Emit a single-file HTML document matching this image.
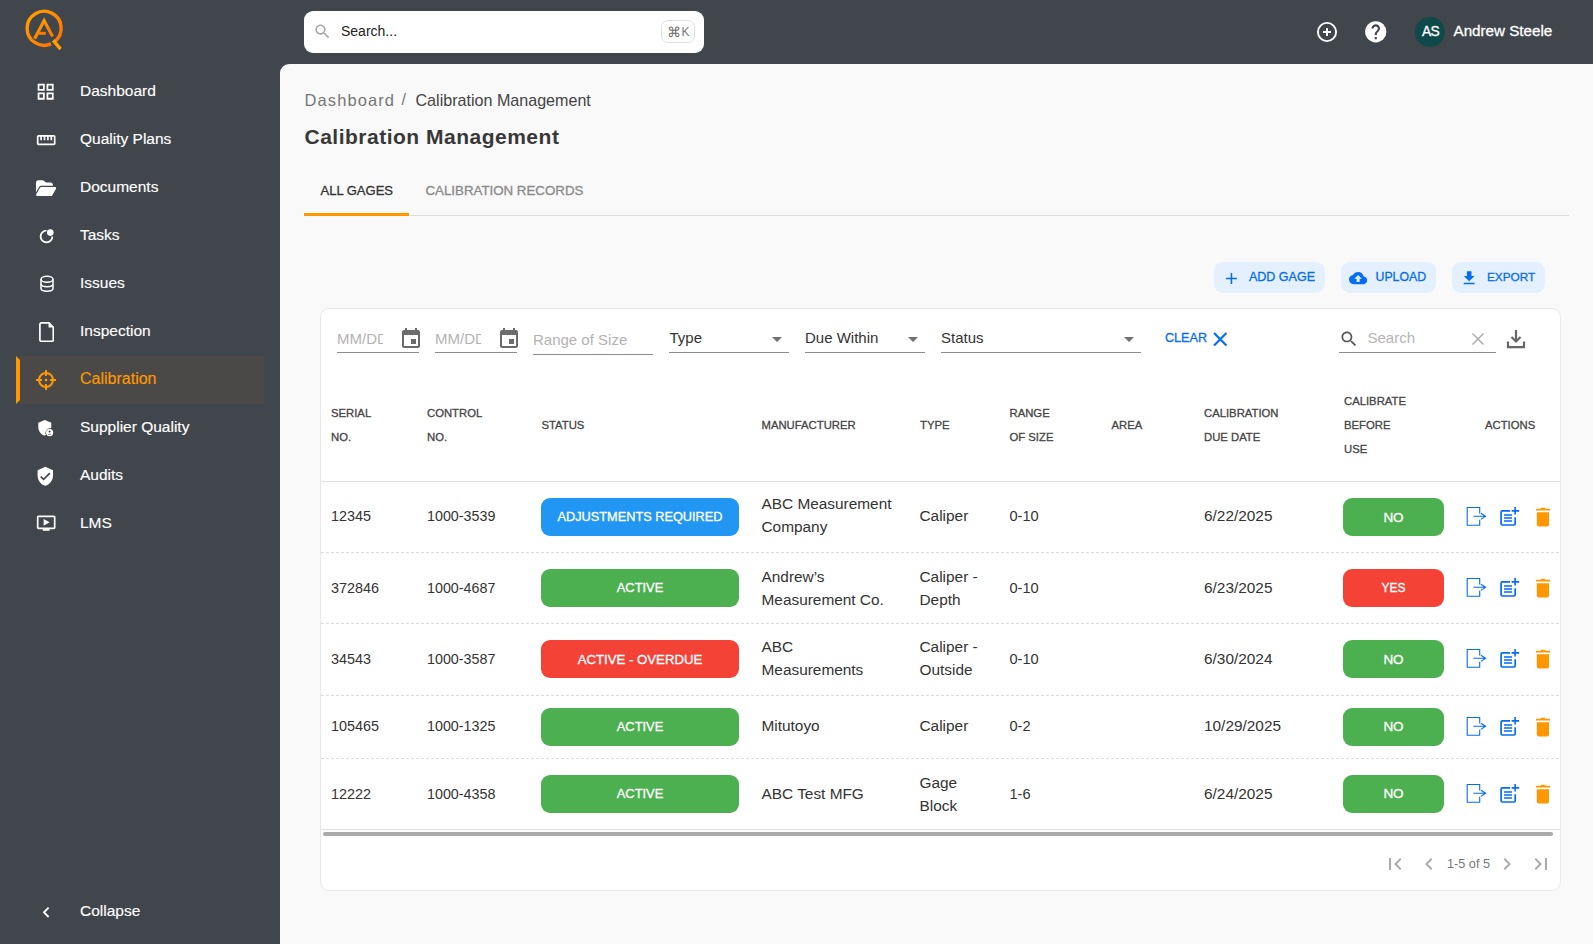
<!DOCTYPE html>
<html><head><meta charset="utf-8"><title>Calibration Management</title>
<style>
html,body{margin:0;padding:0;}
body{width:1593px;height:944px;overflow:hidden;position:relative;background:#41454c;font-family:"Liberation Sans", sans-serif;}
.t{position:absolute;white-space:nowrap;line-height:1;}
svg{display:block;}
</style></head><body>
<div style="position:absolute;left:280px;top:64px;width:1313px;height:880px;background:#f9f9f9;border-top-left-radius:9px;"></div>
<svg style="position:absolute;left:20px;top:6px;" width="48" height="46" viewBox="20 6 48 46">
<defs><linearGradient id="lg" x1="0" y1="0" x2="1" y2="1"><stop offset="0" stop-color="#ffa200"/><stop offset="1" stop-color="#ff7000"/></linearGradient></defs>
<path d="M51.01 43.83 A17 17 0 1 1 54.57 41.70" fill="none" stroke="url(#lg)" stroke-width="3.4"/>
<path d="M53.2 40.4 L60.6 49.2" stroke="#ffa000" stroke-width="3.4" fill="none"/>
<path d="M34.6 38.8 L44.1 20.6 L52.6 36.6" fill="none" stroke="url(#lg)" stroke-width="3.2" stroke-linejoin="miter"/>
<path d="M38.6 33.3 L45.8 33.3" stroke="#ff7a00" stroke-width="3" fill="none"/>
</svg>
<div style="position:absolute;left:16px;top:356px;width:248px;height:48px;background:#4a4947;"></div>
<div style="position:absolute;left:16px;top:356px;width:0;height:40px;border-left:4px solid #ff9800;border-top:4px solid transparent;border-bottom:4px solid transparent;"></div>
<div class="t" style="left:80px;top:82.88px;font-size:15.5px;color:#ffffff;-webkit-text-stroke:0.15px #ffffff;">Dashboard</div>
<div class="t" style="left:80px;top:130.88px;font-size:15.5px;color:#ffffff;-webkit-text-stroke:0.15px #ffffff;">Quality Plans</div>
<div class="t" style="left:80px;top:178.88px;font-size:15.5px;color:#ffffff;-webkit-text-stroke:0.15px #ffffff;">Documents</div>
<div class="t" style="left:80px;top:226.88px;font-size:15.5px;color:#ffffff;-webkit-text-stroke:0.15px #ffffff;">Tasks</div>
<div class="t" style="left:80px;top:274.88px;font-size:15.5px;color:#ffffff;-webkit-text-stroke:0.15px #ffffff;">Issues</div>
<div class="t" style="left:80px;top:322.88px;font-size:15.5px;color:#ffffff;-webkit-text-stroke:0.15px #ffffff;">Inspection</div>
<div class="t" style="left:80px;top:371.46px;font-size:16px;color:#ff9800;-webkit-text-stroke:0.15px #ff9800;">Calibration</div>
<div class="t" style="left:80px;top:418.88px;font-size:15.5px;color:#ffffff;-webkit-text-stroke:0.15px #ffffff;">Supplier Quality</div>
<div class="t" style="left:80px;top:466.88px;font-size:15.5px;color:#ffffff;-webkit-text-stroke:0.15px #ffffff;">Audits</div>
<div class="t" style="left:80px;top:514.88px;font-size:15.5px;color:#ffffff;-webkit-text-stroke:0.15px #ffffff;">LMS</div>
<div class="t" style="left:80px;top:902.88px;font-size:15.5px;color:#fff;-webkit-text-stroke:0.15px #fff;">Collapse</div>
<svg style="position:absolute;left:35.3px;top:81.3px;" width="21.3" height="21.3" viewBox="0 0 24 24"><path fill="#ffffff" d="M3 3v8h8V3H3zm6 6H5V5h4v4zm-6 4v8h8v-8H3zm6 6H5v-4h4v4zm4-16v8h8V3h-8zm6 6h-4V5h4v4zm-6 4v8h8v-8h-8zm6 6h-4v-4h4v4z"/></svg>
<svg style="position:absolute;left:36.15px;top:129.5px;" width="20.4" height="20.4" viewBox="0 0 24 24"><path fill="#ffffff" d="M21 6H3c-1.1 0-2 .9-2 2v8c0 1.1.9 2 2 2h18c1.1 0 2-.9 2-2V8c0-1.1-.9-2-2-2zm0 10H3V8h2v4h2V8h2v4h2V8h2v4h2V8h2v4h2V8h2v8z"/></svg>
<svg style="position:absolute;left:35.8px;top:179.7px;preserveAspectRatio:none" width="20.3" height="16.1" viewBox="0 32 576 448"><path fill="#ffffff" d="M88.7 223.8L0 375.8V96C0 60.7 28.7 32 64 32H181.5c17 0 33.3 6.7 45.3 18.7l26.5 26.5c12 12 28.3 18.7 45.3 18.7H416c35.3 0 64 28.7 64 64v32H144c-22.8 0-43.8 12.1-55.3 31.8zm27.6 16.1C122.1 230 132.6 224 144 224H544c11.5 0 22 6.1 27.7 16.1s5.7 22.2-.1 32.1l-112 192C453.9 474 443.4 480 432 480H32c-11.5 0-22-6.1-27.7-16.1s-5.7-22.2 .1-32.1l112-192z"/></svg>
<svg style="position:absolute;left:38px;top:227px;" width="18" height="18" viewBox="0 0 18 18"><path d="M8.5 3.6 A5.9 5.9 0 1 0 14.4 9.5" fill="none" stroke="#ffffff" stroke-width="1.8"/><circle cx="12.3" cy="5.6" r="3.3" fill="#ffffff"/></svg>
<svg style="position:absolute;left:39px;top:275px;" width="16" height="18" viewBox="0 0 16 18"><g fill="none" stroke="#ffffff" stroke-width="1.5"><ellipse cx="8" cy="4.2" rx="6" ry="3"/><path d="M2 4.2v9.4c0 1.5 2.7 2.6 6 2.6s6-1.1 6-2.6V4.2"/><path d="M2 9.1c0 1.5 2.7 2.6 6 2.6s6-1.1 6-2.6"/></g></svg>
<svg style="position:absolute;left:38.5px;top:322px;" width="15.2" height="20.2" viewBox="0 0 15.2 20.2"><path d="M2.3 0.9 H10 L14.3 5.2 V17.9 A1.4 1.4 0 0 1 12.9 19.3 H2.3 A1.4 1.4 0 0 1 0.9 17.9 V2.3 A1.4 1.4 0 0 1 2.3 0.9Z" fill="none" stroke="#ffffff" stroke-width="1.7"/><path d="M9.6 0.9 V5.6 H14.3Z" fill="#ffffff"/></svg>
<svg style="position:absolute;left:35.9px;top:369.9px;" width="20" height="20" viewBox="0 0 20 20"><g stroke="#ff9800" fill="none" stroke-width="2"><circle cx="10" cy="10" r="7"/><path d="M10 0v6.1M10 13.9v6.1M0 10h6.1M13.9 10h6.1"/></g><rect x="8.8" y="8.8" width="2.4" height="2.4" fill="#ff9800"/></svg>
<svg style="position:absolute;left:37px;top:419px;" width="18" height="18" viewBox="0 0 18 18"><path d="M7.8 1 L1.3 3.8 V8.2 C1.3 12 3.9 15.5 7.8 16.6 C8.2 16.5 8.6 16.3 9 16.1 A4.6 4.6 0 0 1 13.8 9.3 C14.1 8.9 14.3 8.5 14.3 8.2 V3.8Z" fill="#ffffff"/><circle cx="12.6" cy="13.6" r="3.6" fill="#ffffff"/><circle cx="12.6" cy="12.6" r="1" fill="#41454c"/><path d="M10.7 15.4 C11 14.4 14.2 14.4 14.5 15.4Z" fill="#41454c"/></svg>
<svg style="position:absolute;left:35.0px;top:465.5px;" width="20.6" height="20.6" viewBox="0 0 24 24"><path fill="#ffffff" d="M12 1L3 5v6c0 5.55 3.84 10.74 9 12 5.16-1.26 9-6.45 9-12V5l-9-4zm-2 16l-4-4 1.41-1.41L10 14.17l6.59-6.59L18 9l-8 8z"/></svg>
<svg style="position:absolute;left:36.05px;top:513.35px;" width="20.4" height="20.4" viewBox="0 0 24 24"><path fill="#ffffff" d="M21 3H3c-1.11 0-2 .89-2 2v12c0 1.1.89 2 2 2h5v2h8v-2h5c1.1 0 1.99-.9 1.99-2L23 5c0-1.11-.9-2-2-2zm0 14H3V5h18v12zM16 11l-7 4V7z"/></svg>
<svg style="position:absolute;left:38px;top:904px;" width="16" height="16" viewBox="0 0 16 16"><path d="M10.6 3.6 L6 8.3 L10.6 13" fill="none" stroke="#ffffff" stroke-width="1.9"/></svg>
<div style="position:absolute;left:304px;top:11px;width:400px;height:42px;background:#fff;border-radius:9px;"></div>
<svg style="position:absolute;left:313px;top:22px;" width="19" height="19" viewBox="0 0 24 24"><path fill="#a9a9a9" d="M15.5 14h-.79l-.28-.27C15.41 12.59 16 11.11 16 9.5 16 5.91 13.09 3 9.5 3S3 5.91 3 9.5 5.91 16 9.5 16c1.61 0 3.09-.59 4.23-1.57l.27.28v.79l5 4.99L20.49 19l-4.99-5zm-6 0C7.01 14 5 11.99 5 9.5S7.01 5 9.5 5 14 7.01 14 9.5 11.99 14 9.5 14z"/></svg>
<div class="t" style="left:341px;top:24.15px;font-size:14px;color:#222;font-weight:400;">Search...</div>
<div style="position:absolute;left:661px;top:20px;width:34px;height:23px;box-sizing:border-box;border:1px solid #e0e0e0;border-radius:7px;"></div>
<div class="t" style="left:667px;top:25.10px;font-size:14.3px;color:#6f6f6f;font-weight:400;">&#8984;</div>
<div class="t" style="left:681.5px;top:26.04px;font-size:12px;color:#7a7a7a;font-weight:400;">K</div>
<svg style="position:absolute;left:1316px;top:21px;" width="22" height="22" viewBox="0 0 22 22"><circle cx="11" cy="11" r="9.1" fill="none" stroke="#fff" stroke-width="1.9"/><path d="M11 7v8M7 11h8" stroke="#fff" stroke-width="2"/></svg>
<svg style="position:absolute;left:1362.75px;top:19.25px;" width="25.5" height="25.5" viewBox="0 0 24 24"><circle cx="12" cy="12" r="10" fill="#fff"/><path fill="#41454c" d="M13 19h-2v-2h2v2zm2.07-7.75l-.9.92C13.45 12.9 13 13.5 13 15h-2v-.5c0-1.1.45-2.1 1.17-2.83l1.24-1.26c.37-.36.59-.86.59-1.41 0-1.1-.9-2-2-2s-2 .9-2 2H8c0-2.21 1.79-4 4-4s4 1.79 4 4c0 .88-.36 1.68-.93 2.25z"/></svg>
<div style="position:absolute;left:1415px;top:17px;width:30px;height:30px;background:#0d4a4a;border-radius:50%;"></div>
<div class="t" style="left:1410.5px;width:40px;text-align:center;top:25.32px;font-size:13.8px;color:#fff;-webkit-text-stroke:0.3px #fff;letter-spacing:-0.6px;">AS</div>
<div class="t" style="left:1453.5px;top:23.13px;font-size:15.2px;color:#fff;-webkit-text-stroke:0.3px #fff;">Andrew Steele</div>
<div class="t" style="left:304.5px;top:92.03px;font-size:16.5px;color:#777;font-weight:400;letter-spacing:1.1px;">Dashboard</div>
<div class="t" style="left:401.5px;top:92.46px;font-size:16px;color:#777;font-weight:400;">/</div>
<div class="t" style="left:415.5px;top:92.37px;font-size:16.1px;color:#444;font-weight:400;">Calibration Management</div>
<div class="t" style="left:304.5px;top:126.22px;font-size:21px;color:#383838;font-weight:700;letter-spacing:0.5px;">Calibration Management</div>
<div class="t" style="left:320.5px;top:184.20px;font-size:13px;color:#333;-webkit-text-stroke:0.3px #333;">ALL GAGES</div>
<div class="t" style="left:425.5px;top:183.94px;font-size:13.3px;color:#8a8a8a;-webkit-text-stroke:0.3px #8a8a8a;">CALIBRATION RECORDS</div>
<div style="position:absolute;left:304px;top:215px;width:1265px;height:1px;background:#dcdcdc;"></div>
<div style="position:absolute;left:304px;top:213px;width:105px;height:2.5px;background:#ff9800;"></div>
<div style="position:absolute;left:1214px;top:262px;width:111px;height:31px;background:#e4f0fe;border-radius:9px;"></div>
<div style="position:absolute;left:1341px;top:262px;width:95px;height:31px;background:#e4f0fe;border-radius:9px;"></div>
<div style="position:absolute;left:1452px;top:262px;width:93px;height:31px;background:#e4f0fe;border-radius:9px;"></div>
<svg style="position:absolute;left:1222px;top:269px;" width="18.9" height="18.9" viewBox="0 0 24 24"><path fill="#056cf5" d="M19 13h-6v6h-2v-6H5v-2h6V5h2v6h6v2z"/></svg>
<div class="t" style="left:1249px;top:270.82px;font-size:12.5px;color:#056cf5;-webkit-text-stroke:0.3px #056cf5;">ADD GAGE</div>
<svg style="position:absolute;left:1348.8px;top:268.8px;" width="18.2" height="18.2" viewBox="0 0 24 24"><path fill="#056cf5" d="M19.35 10.04C18.67 6.59 15.64 4 12 4 9.11 4 6.6 5.64 5.35 8.04 2.34 8.36 0 10.91 0 14c0 3.31 2.69 6 6 6h13c2.76 0 5-2.24 5-5 0-2.64-2.05-4.78-4.65-4.96zM14 13v4h-4v-4H7l5-5 5 5h-3z"/></svg>
<div class="t" style="left:1375.5px;top:270.59px;font-size:12.3px;color:#056cf5;-webkit-text-stroke:0.3px #056cf5;">UPLOAD</div>
<svg style="position:absolute;left:1460.2px;top:268.7px;" width="18.4" height="18.4" viewBox="0 0 24 24"><path fill="#056cf5" d="M19 9h-4V3H9v6H5l7 7 7-7zM5 18v2h14v-2H5z"/></svg>
<div class="t" style="left:1487px;top:272.01px;font-size:11.8px;color:#056cf5;-webkit-text-stroke:0.3px #056cf5;">EXPORT</div>
<div style="position:absolute;left:320px;top:308px;width:1241px;height:582.5px;box-sizing:border-box;background:#fff;border:1px solid #e9e9e9;border-radius:9px;"></div>
<div style="position:absolute;left:337px;top:325px;width:46px;height:24px;overflow:hidden">
<div class="t" style="left:0px;top:5.60px;font-size:15px;color:#b3b3b3;font-weight:400;">MM/DD/YYYY</div>
</div>
<div style="position:absolute;left:435px;top:325px;width:46px;height:24px;overflow:hidden">
<div class="t" style="left:0px;top:5.60px;font-size:15px;color:#b3b3b3;font-weight:400;">MM/DD/YYYY</div>
</div>
<svg style="position:absolute;left:399px;top:326.5px;" width="24" height="22" viewBox="0 0 24 22"><path fill="#6b6b6b" d="M17 12h-5v5h5v-5zM16 1v2H8V1H6v2H5c-1.11 0-1.99.9-1.99 2L3 19c0 1.1.89 2 2 2h14c1.1 0 2-.9 2-2V5c0-1.1-.9-2-2-2h-1V1h-2zm3 18H5V8h14v11z"/></svg>
<svg style="position:absolute;left:497px;top:326.5px;" width="24" height="22" viewBox="0 0 24 22"><path fill="#6b6b6b" d="M17 12h-5v5h5v-5zM16 1v2H8V1H6v2H5c-1.11 0-1.99.9-1.99 2L3 19c0 1.1.89 2 2 2h14c1.1 0 2-.9 2-2V5c0-1.1-.9-2-2-2h-1V1h-2zm3 18H5V8h14v11z"/></svg>
<div style="position:absolute;left:337px;top:352px;width:82px;height:1px;background:#8c8c8c;"></div>
<div style="position:absolute;left:435px;top:352px;width:82px;height:1px;background:#8c8c8c;"></div>
<div class="t" style="left:533px;top:331.70px;font-size:15px;color:#b3b3b3;font-weight:400;">Range of Size</div>
<div style="position:absolute;left:533px;top:354px;width:120px;height:1px;background:#8c8c8c;"></div>
<div class="t" style="left:669.5px;top:330.30px;font-size:15px;color:#333;font-weight:400;">Type</div>
<svg style="position:absolute;left:765px;top:327px;" width="24" height="24" viewBox="0 0 24 24"><path fill="#707070" d="M7 10l5 5 5-5z"/></svg>
<div style="position:absolute;left:669px;top:352px;width:120px;height:1px;background:#8c8c8c;"></div>
<div class="t" style="left:805px;top:330.30px;font-size:15px;color:#333;font-weight:400;">Due Within</div>
<svg style="position:absolute;left:901px;top:327px;" width="24" height="24" viewBox="0 0 24 24"><path fill="#707070" d="M7 10l5 5 5-5z"/></svg>
<div style="position:absolute;left:805px;top:352px;width:120px;height:1px;background:#8c8c8c;"></div>
<div class="t" style="left:941px;top:330.30px;font-size:15px;color:#333;font-weight:400;">Status</div>
<svg style="position:absolute;left:1116.5px;top:327px;" width="24" height="24" viewBox="0 0 24 24"><path fill="#707070" d="M7 10l5 5 5-5z"/></svg>
<div style="position:absolute;left:941px;top:352px;width:200px;height:1px;background:#8c8c8c;"></div>
<div class="t" style="left:1165px;top:332.13px;font-size:12.6px;color:#056cf5;-webkit-text-stroke:0.3px #056cf5;">CLEAR</div>
<svg style="position:absolute;left:1211.5px;top:330.5px;" width="16.5" height="16.5" viewBox="0 0 16 16"><path d="M2 2 L14 14 M14 2 L2 14" stroke="#056cf5" stroke-width="2.1" fill="none"/></svg>
<svg style="position:absolute;left:1338.8px;top:329.1px;" width="20" height="20" viewBox="0 0 24 24"><path fill="#555" d="M15.5 14h-.79l-.28-.27C15.41 12.59 16 11.11 16 9.5 16 5.91 13.09 3 9.5 3S3 5.91 3 9.5 5.91 16 9.5 16c1.61 0 3.09-.59 4.23-1.57l.27.28v.79l5 4.99L20.49 19l-4.99-5zm-6 0C7.01 14 5 11.99 5 9.5S7.01 5 9.5 5 14 7.01 14 9.5 11.99 14 9.5 14z"/></svg>
<div class="t" style="left:1367.5px;top:330.30px;font-size:15px;color:#b5b5b5;font-weight:400;">Search</div>
<svg style="position:absolute;left:1471px;top:332px;" width="14" height="14" viewBox="0 0 14 14"><path d="M1.5 1.5 L12.5 12.5 M12.5 1.5 L1.5 12.5" stroke="#a8a8a8" stroke-width="1.4" fill="none"/></svg>
<div style="position:absolute;left:1339px;top:352px;width:157px;height:1px;background:#8c8c8c;"></div>
<svg style="position:absolute;left:1506px;top:329px;" width="20" height="20" viewBox="0 0 20 20"><g fill="none" stroke="#666" stroke-width="2.2"><path d="M10 1v11.5M5.5 8l4.5 4.5 4.5-4.5"/><path d="M2 12.5v5.6h16v-5.6"/></g></svg>
<div class="t" style="left:331px;top:407.73px;font-size:11.3px;color:#454545;-webkit-text-stroke:0.3px #454545;">SERIAL</div>
<div class="t" style="left:331px;top:431.63px;font-size:11.3px;color:#454545;-webkit-text-stroke:0.3px #454545;">NO.</div>
<div class="t" style="left:427px;top:407.73px;font-size:11.3px;color:#454545;-webkit-text-stroke:0.3px #454545;">CONTROL</div>
<div class="t" style="left:427px;top:431.63px;font-size:11.3px;color:#454545;-webkit-text-stroke:0.3px #454545;">NO.</div>
<div class="t" style="left:541.5px;top:419.63px;font-size:11.3px;color:#454545;-webkit-text-stroke:0.3px #454545;">STATUS</div>
<div class="t" style="left:761.5px;top:419.63px;font-size:11.3px;color:#454545;-webkit-text-stroke:0.3px #454545;">MANUFACTURER</div>
<div class="t" style="left:920px;top:419.63px;font-size:11.3px;color:#454545;-webkit-text-stroke:0.3px #454545;">TYPE</div>
<div class="t" style="left:1009.5px;top:407.73px;font-size:11.3px;color:#454545;-webkit-text-stroke:0.3px #454545;">RANGE</div>
<div class="t" style="left:1009.5px;top:431.63px;font-size:11.3px;color:#454545;-webkit-text-stroke:0.3px #454545;">OF SIZE</div>
<div class="t" style="left:1111.5px;top:419.63px;font-size:11.3px;color:#454545;-webkit-text-stroke:0.3px #454545;">AREA</div>
<div class="t" style="left:1204px;top:407.73px;font-size:11.3px;color:#454545;-webkit-text-stroke:0.3px #454545;">CALIBRATION</div>
<div class="t" style="left:1204px;top:431.63px;font-size:11.3px;color:#454545;-webkit-text-stroke:0.3px #454545;">DUE DATE</div>
<div class="t" style="left:1344px;top:395.63px;font-size:11.3px;color:#454545;-webkit-text-stroke:0.3px #454545;">CALIBRATE</div>
<div class="t" style="left:1344px;top:419.63px;font-size:11.3px;color:#454545;-webkit-text-stroke:0.3px #454545;">BEFORE</div>
<div class="t" style="left:1344px;top:444.43px;font-size:11.3px;color:#454545;-webkit-text-stroke:0.3px #454545;">USE</div>
<div class="t" style="left:1485px;top:419.63px;font-size:11.3px;color:#454545;-webkit-text-stroke:0.3px #454545;">ACTIONS</div>
<div style="position:absolute;left:321px;top:481px;width:1239px;height:1px;background:#e0e0e0;"></div>
<div class="t" style="left:331px;top:508.61px;font-size:14.4px;color:#333;font-weight:400;">12345</div>
<div class="t" style="left:427px;top:508.70px;font-size:14.3px;color:#333;font-weight:400;">1000-3539</div>
<div style="position:absolute;left:541px;top:498.0px;width:198px;height:38px;background:#2196f3;border-radius:9px;"></div>
<div class="t" style="left:540.0px;width:200px;text-align:center;top:511.21px;font-size:12.75px;color:#fff;-webkit-text-stroke:0.3px #fff;">ADJUSTMENTS REQUIRED</div>
<div class="t" style="left:761.5px;top:496.46px;font-size:15.4px;color:#333;font-weight:400;">ABC Measurement</div>
<div class="t" style="left:761.5px;top:519.46px;font-size:15.4px;color:#333;font-weight:400;">Company</div>
<div class="t" style="left:919.5px;top:507.76px;font-size:15.4px;color:#333;font-weight:400;">Caliper</div>
<div class="t" style="left:1009.5px;top:508.74px;font-size:14.6px;color:#333;font-weight:400;">0-10</div>
<div class="t" style="left:1204px;top:507.76px;font-size:15.4px;color:#333;font-weight:400;">6/22/2025</div>
<div style="position:absolute;left:1343px;top:498.0px;width:101px;height:38px;background:#4caf50;border-radius:9px;"></div>
<div class="t" style="left:1343.5px;width:100px;text-align:center;top:510.57px;font-size:13.5px;color:#fff;-webkit-text-stroke:0.3px #fff;">NO</div>
<svg style="position:absolute;left:1466px;top:507.0px;" width="21" height="20" viewBox="0 0 21 20"><path d="M13.7 6.5 V0.5 H1.2 V18.3 H13.7 V12.7" fill="none" stroke="#056cf5" stroke-width="1.1"/><path d="M7.3 9.3 H19.5 M14.9 6.2 L19.6 9.3 L14.9 12.4" fill="none" stroke="#056cf5" stroke-width="1.1"/></svg>
<svg style="position:absolute;left:1499px;top:506.0px;" width="22" height="22" viewBox="0 0 22 22"><path d="M11.0 4.9 H3.4 Q2.1 4.9 2.1 6.2 V17.7 Q2.1 19 3.4 19 H14.9 Q16.2 19 16.2 17.7 V11.3" fill="none" stroke="#056cf5" stroke-width="1.7"/><path d="M5 8.9h8.1M5 12h8.1M5 15h8.1" stroke="#056cf5" stroke-width="1.5"/><path d="M16.1 0.9v7.6M12.6 4.9h7.6" stroke="#056cf5" stroke-width="1.6"/></svg>
<svg style="position:absolute;left:1535px;top:507.0px;" width="16" height="20" viewBox="0 0 16 20"><path fill="#ff9800" d="M1.8 5.2 H14 V17.6 Q14 19.6 12 19.6 H3.8 Q1.8 19.6 1.8 17.6Z"/><path fill="#ff9800" d="M1 1.8 H5.5 L6.4 0.8 H9.6 L10.5 1.8 H15 V3.4 H1Z"/></svg>
<div style="position:absolute;left:321px;top:552px;width:1239px;height:1px;background-image:linear-gradient(to right,#dcdcdc 60%,transparent 60%);background-size:5px 1px;"></div>
<div class="t" style="left:331px;top:581.11px;font-size:14.4px;color:#333;font-weight:400;">372846</div>
<div class="t" style="left:427px;top:581.20px;font-size:14.3px;color:#333;font-weight:400;">1000-4687</div>
<div style="position:absolute;left:541px;top:568.5px;width:198px;height:38px;background:#4caf50;border-radius:9px;"></div>
<div class="t" style="left:540.0px;width:200px;text-align:center;top:581.58px;font-size:12.9px;color:#fff;-webkit-text-stroke:0.3px #fff;">ACTIVE</div>
<div class="t" style="left:761.5px;top:568.96px;font-size:15.4px;color:#333;font-weight:400;">Andrew&#8217;s</div>
<div class="t" style="left:761.5px;top:591.96px;font-size:15.4px;color:#333;font-weight:400;">Measurement Co.</div>
<div class="t" style="left:919.5px;top:568.96px;font-size:15.4px;color:#333;font-weight:400;">Caliper -</div>
<div class="t" style="left:919.5px;top:591.96px;font-size:15.4px;color:#333;font-weight:400;">Depth</div>
<div class="t" style="left:1009.5px;top:581.24px;font-size:14.6px;color:#333;font-weight:400;">0-10</div>
<div class="t" style="left:1204px;top:580.26px;font-size:15.4px;color:#333;font-weight:400;">6/23/2025</div>
<div style="position:absolute;left:1343px;top:568.5px;width:101px;height:38px;background:#f44336;border-radius:9px;"></div>
<div class="t" style="left:1343.5px;width:100px;text-align:center;top:582.34px;font-size:12px;color:#fff;-webkit-text-stroke:0.3px #fff;">YES</div>
<svg style="position:absolute;left:1466px;top:577.5px;" width="21" height="20" viewBox="0 0 21 20"><path d="M13.7 6.5 V0.5 H1.2 V18.3 H13.7 V12.7" fill="none" stroke="#056cf5" stroke-width="1.1"/><path d="M7.3 9.3 H19.5 M14.9 6.2 L19.6 9.3 L14.9 12.4" fill="none" stroke="#056cf5" stroke-width="1.1"/></svg>
<svg style="position:absolute;left:1499px;top:576.5px;" width="22" height="22" viewBox="0 0 22 22"><path d="M11.0 4.9 H3.4 Q2.1 4.9 2.1 6.2 V17.7 Q2.1 19 3.4 19 H14.9 Q16.2 19 16.2 17.7 V11.3" fill="none" stroke="#056cf5" stroke-width="1.7"/><path d="M5 8.9h8.1M5 12h8.1M5 15h8.1" stroke="#056cf5" stroke-width="1.5"/><path d="M16.1 0.9v7.6M12.6 4.9h7.6" stroke="#056cf5" stroke-width="1.6"/></svg>
<svg style="position:absolute;left:1535px;top:577.5px;" width="16" height="20" viewBox="0 0 16 20"><path fill="#ff9800" d="M1.8 5.2 H14 V17.6 Q14 19.6 12 19.6 H3.8 Q1.8 19.6 1.8 17.6Z"/><path fill="#ff9800" d="M1 1.8 H5.5 L6.4 0.8 H9.6 L10.5 1.8 H15 V3.4 H1Z"/></svg>
<div style="position:absolute;left:321px;top:623px;width:1239px;height:1px;background-image:linear-gradient(to right,#dcdcdc 60%,transparent 60%);background-size:5px 1px;"></div>
<div class="t" style="left:331px;top:651.61px;font-size:14.4px;color:#333;font-weight:400;">34543</div>
<div class="t" style="left:427px;top:651.70px;font-size:14.3px;color:#333;font-weight:400;">1000-3587</div>
<div style="position:absolute;left:541px;top:640.0px;width:198px;height:38px;background:#f44336;border-radius:9px;"></div>
<div class="t" style="left:540.0px;width:200px;text-align:center;top:652.83px;font-size:13.2px;color:#fff;-webkit-text-stroke:0.3px #fff;">ACTIVE - OVERDUE</div>
<div class="t" style="left:761.5px;top:639.46px;font-size:15.4px;color:#333;font-weight:400;">ABC</div>
<div class="t" style="left:761.5px;top:662.46px;font-size:15.4px;color:#333;font-weight:400;">Measurements</div>
<div class="t" style="left:919.5px;top:639.46px;font-size:15.4px;color:#333;font-weight:400;">Caliper -</div>
<div class="t" style="left:919.5px;top:662.46px;font-size:15.4px;color:#333;font-weight:400;">Outside</div>
<div class="t" style="left:1009.5px;top:651.74px;font-size:14.6px;color:#333;font-weight:400;">0-10</div>
<div class="t" style="left:1204px;top:650.76px;font-size:15.4px;color:#333;font-weight:400;">6/30/2024</div>
<div style="position:absolute;left:1343px;top:640.0px;width:101px;height:38px;background:#4caf50;border-radius:9px;"></div>
<div class="t" style="left:1343.5px;width:100px;text-align:center;top:652.57px;font-size:13.5px;color:#fff;-webkit-text-stroke:0.3px #fff;">NO</div>
<svg style="position:absolute;left:1466px;top:649.0px;" width="21" height="20" viewBox="0 0 21 20"><path d="M13.7 6.5 V0.5 H1.2 V18.3 H13.7 V12.7" fill="none" stroke="#056cf5" stroke-width="1.1"/><path d="M7.3 9.3 H19.5 M14.9 6.2 L19.6 9.3 L14.9 12.4" fill="none" stroke="#056cf5" stroke-width="1.1"/></svg>
<svg style="position:absolute;left:1499px;top:648.0px;" width="22" height="22" viewBox="0 0 22 22"><path d="M11.0 4.9 H3.4 Q2.1 4.9 2.1 6.2 V17.7 Q2.1 19 3.4 19 H14.9 Q16.2 19 16.2 17.7 V11.3" fill="none" stroke="#056cf5" stroke-width="1.7"/><path d="M5 8.9h8.1M5 12h8.1M5 15h8.1" stroke="#056cf5" stroke-width="1.5"/><path d="M16.1 0.9v7.6M12.6 4.9h7.6" stroke="#056cf5" stroke-width="1.6"/></svg>
<svg style="position:absolute;left:1535px;top:649.0px;" width="16" height="20" viewBox="0 0 16 20"><path fill="#ff9800" d="M1.8 5.2 H14 V17.6 Q14 19.6 12 19.6 H3.8 Q1.8 19.6 1.8 17.6Z"/><path fill="#ff9800" d="M1 1.8 H5.5 L6.4 0.8 H9.6 L10.5 1.8 H15 V3.4 H1Z"/></svg>
<div style="position:absolute;left:321px;top:695px;width:1239px;height:1px;background-image:linear-gradient(to right,#dcdcdc 60%,transparent 60%);background-size:5px 1px;"></div>
<div class="t" style="left:331px;top:719.11px;font-size:14.4px;color:#333;font-weight:400;">105465</div>
<div class="t" style="left:427px;top:719.20px;font-size:14.3px;color:#333;font-weight:400;">1000-1325</div>
<div style="position:absolute;left:541px;top:707.5px;width:198px;height:38px;background:#4caf50;border-radius:9px;"></div>
<div class="t" style="left:540.0px;width:200px;text-align:center;top:720.58px;font-size:12.9px;color:#fff;-webkit-text-stroke:0.3px #fff;">ACTIVE</div>
<div class="t" style="left:761.5px;top:718.26px;font-size:15.4px;color:#333;font-weight:400;">Mitutoyo</div>
<div class="t" style="left:919.5px;top:718.26px;font-size:15.4px;color:#333;font-weight:400;">Caliper</div>
<div class="t" style="left:1009.5px;top:719.24px;font-size:14.6px;color:#333;font-weight:400;">0-2</div>
<div class="t" style="left:1204px;top:718.26px;font-size:15.4px;color:#333;font-weight:400;">10/29/2025</div>
<div style="position:absolute;left:1343px;top:707.5px;width:101px;height:38px;background:#4caf50;border-radius:9px;"></div>
<div class="t" style="left:1343.5px;width:100px;text-align:center;top:720.07px;font-size:13.5px;color:#fff;-webkit-text-stroke:0.3px #fff;">NO</div>
<svg style="position:absolute;left:1466px;top:716.5px;" width="21" height="20" viewBox="0 0 21 20"><path d="M13.7 6.5 V0.5 H1.2 V18.3 H13.7 V12.7" fill="none" stroke="#056cf5" stroke-width="1.1"/><path d="M7.3 9.3 H19.5 M14.9 6.2 L19.6 9.3 L14.9 12.4" fill="none" stroke="#056cf5" stroke-width="1.1"/></svg>
<svg style="position:absolute;left:1499px;top:715.5px;" width="22" height="22" viewBox="0 0 22 22"><path d="M11.0 4.9 H3.4 Q2.1 4.9 2.1 6.2 V17.7 Q2.1 19 3.4 19 H14.9 Q16.2 19 16.2 17.7 V11.3" fill="none" stroke="#056cf5" stroke-width="1.7"/><path d="M5 8.9h8.1M5 12h8.1M5 15h8.1" stroke="#056cf5" stroke-width="1.5"/><path d="M16.1 0.9v7.6M12.6 4.9h7.6" stroke="#056cf5" stroke-width="1.6"/></svg>
<svg style="position:absolute;left:1535px;top:716.5px;" width="16" height="20" viewBox="0 0 16 20"><path fill="#ff9800" d="M1.8 5.2 H14 V17.6 Q14 19.6 12 19.6 H3.8 Q1.8 19.6 1.8 17.6Z"/><path fill="#ff9800" d="M1 1.8 H5.5 L6.4 0.8 H9.6 L10.5 1.8 H15 V3.4 H1Z"/></svg>
<div style="position:absolute;left:321px;top:758px;width:1239px;height:1px;background-image:linear-gradient(to right,#dcdcdc 60%,transparent 60%);background-size:5px 1px;"></div>
<div class="t" style="left:331px;top:787.11px;font-size:14.4px;color:#333;font-weight:400;">12222</div>
<div class="t" style="left:427px;top:787.20px;font-size:14.3px;color:#333;font-weight:400;">1000-4358</div>
<div style="position:absolute;left:541px;top:774.5px;width:198px;height:38px;background:#4caf50;border-radius:9px;"></div>
<div class="t" style="left:540.0px;width:200px;text-align:center;top:787.58px;font-size:12.9px;color:#fff;-webkit-text-stroke:0.3px #fff;">ACTIVE</div>
<div class="t" style="left:761.5px;top:786.26px;font-size:15.4px;color:#333;font-weight:400;">ABC Test MFG</div>
<div class="t" style="left:919.5px;top:774.96px;font-size:15.4px;color:#333;font-weight:400;">Gage</div>
<div class="t" style="left:919.5px;top:797.96px;font-size:15.4px;color:#333;font-weight:400;">Block</div>
<div class="t" style="left:1009.5px;top:787.24px;font-size:14.6px;color:#333;font-weight:400;">1-6</div>
<div class="t" style="left:1204px;top:786.26px;font-size:15.4px;color:#333;font-weight:400;">6/24/2025</div>
<div style="position:absolute;left:1343px;top:774.5px;width:101px;height:38px;background:#4caf50;border-radius:9px;"></div>
<div class="t" style="left:1343.5px;width:100px;text-align:center;top:787.07px;font-size:13.5px;color:#fff;-webkit-text-stroke:0.3px #fff;">NO</div>
<svg style="position:absolute;left:1466px;top:783.5px;" width="21" height="20" viewBox="0 0 21 20"><path d="M13.7 6.5 V0.5 H1.2 V18.3 H13.7 V12.7" fill="none" stroke="#056cf5" stroke-width="1.1"/><path d="M7.3 9.3 H19.5 M14.9 6.2 L19.6 9.3 L14.9 12.4" fill="none" stroke="#056cf5" stroke-width="1.1"/></svg>
<svg style="position:absolute;left:1499px;top:782.5px;" width="22" height="22" viewBox="0 0 22 22"><path d="M11.0 4.9 H3.4 Q2.1 4.9 2.1 6.2 V17.7 Q2.1 19 3.4 19 H14.9 Q16.2 19 16.2 17.7 V11.3" fill="none" stroke="#056cf5" stroke-width="1.7"/><path d="M5 8.9h8.1M5 12h8.1M5 15h8.1" stroke="#056cf5" stroke-width="1.5"/><path d="M16.1 0.9v7.6M12.6 4.9h7.6" stroke="#056cf5" stroke-width="1.6"/></svg>
<svg style="position:absolute;left:1535px;top:783.5px;" width="16" height="20" viewBox="0 0 16 20"><path fill="#ff9800" d="M1.8 5.2 H14 V17.6 Q14 19.6 12 19.6 H3.8 Q1.8 19.6 1.8 17.6Z"/><path fill="#ff9800" d="M1 1.8 H5.5 L6.4 0.8 H9.6 L10.5 1.8 H15 V3.4 H1Z"/></svg>
<div style="position:absolute;left:321px;top:829px;width:1239px;height:1px;background:#e0e0e0;"></div>
<div style="position:absolute;left:323px;top:832px;width:1230px;height:4px;background:#ababab;border-radius:2px;"></div>
<svg style="position:absolute;left:1383px;top:852px;" width="24" height="24" viewBox="0 0 24 24"><path fill="#ababab" d="M18.41 16.59L13.82 12l4.59-4.59L17 6l-6 6 6 6zM6 6h2v12H6z"/></svg>
<svg style="position:absolute;left:1417px;top:852px;" width="24" height="24" viewBox="0 0 24 24"><path fill="#ababab" d="M15.41 7.41L14 6l-6 6 6 6 1.41-1.41L10.83 12z"/></svg>
<div class="t" style="left:1447px;top:858.25px;font-size:12.7px;color:#777;font-weight:400;">1-5 of 5</div>
<svg style="position:absolute;left:1495px;top:852px;" width="24" height="24" viewBox="0 0 24 24"><path fill="#ababab" d="M10 6L8.59 7.41 13.17 12l-4.58 4.59L10 18l6-6z"/></svg>
<svg style="position:absolute;left:1529px;top:852px;" width="24" height="24" viewBox="0 0 24 24"><path fill="#ababab" d="M5.59 7.41L10.18 12l-4.59 4.59L7 18l6-6-6-6zM16 6h2v12h-2z"/></svg>
</body></html>
